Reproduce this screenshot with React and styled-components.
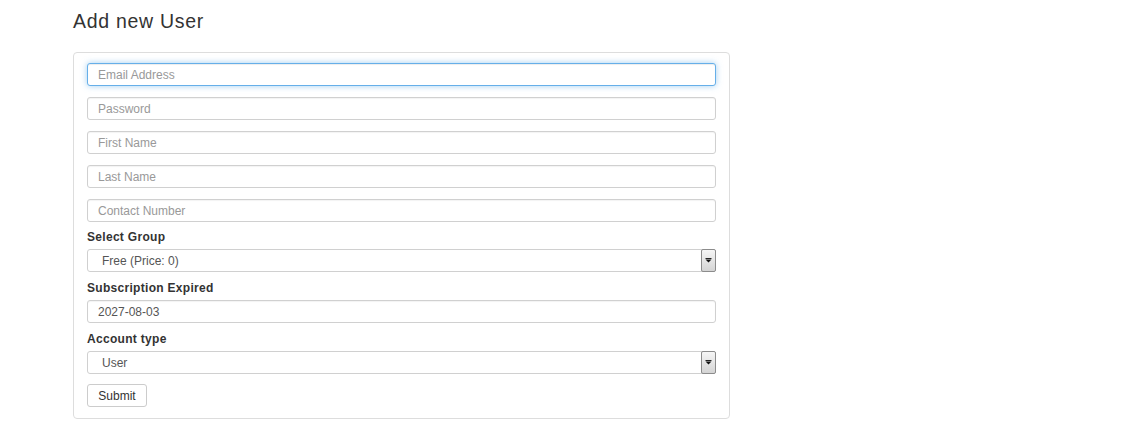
import React from "react";
import styled, { createGlobalStyle } from "styled-components";

const GlobalStyle = createGlobalStyle`
  body {
    margin: 0;
    background: #fff;
    font-family: "Liberation Sans", Arial, sans-serif;
    color: #333;
  }
`;

const Page = styled.div`
  width: 1140px;
  height: 430px;
  padding: 10px 0 0 73px;
  box-sizing: border-box;
`;

const Title = styled.h2`
  margin: 0 0 20px;
  font-size: 19.5px;
  line-height: 22px;
  font-weight: normal;
  letter-spacing: 0.7px;
  color: #333;
`;

const Panel = styled.form`
  width: 657px;
  box-sizing: border-box;
  border: 1px solid #dddddd;
  border-radius: 4px;
  padding: 10px 13px 11px;
  display: flex;
  flex-direction: column;
`;

const Input = styled.input`
  box-sizing: border-box;
  width: 100%;
  height: 23px;
  margin-bottom: ${(p) => (p.$last ? "0" : "11px")};
  padding: 0 10px;
  border: 1px solid ${(p) => (p.$focus ? "#66afe9" : "#d0d0d0")};
  border-radius: 3px;
  font-family: inherit;
  font-size: 12px;
  color: #555;
  background: #fff;
  box-shadow: ${(p) =>
    p.$focus
      ? "inset 0 1px 1px rgba(0,0,0,.075), 0 0 6px rgba(102,175,233,.6)"
      : "inset 0 1px 1px rgba(0,0,0,.05)"};
  outline: none;

  &::placeholder {
    color: #999;
  }
`;

const Label = styled.label`
  display: block;
  margin: ${(p) => (p.$first ? "7px" : "8px")} 0 4px;
  font-size: 12px;
  line-height: 16px;
  font-weight: bold;
  letter-spacing: 0.3px;
  color: #333;
`;

const SelectWrap = styled.div`
  position: relative;
  width: 100%;
  height: 23px;
`;

const Select = styled.select`
  appearance: none;
  -webkit-appearance: none;
  box-sizing: border-box;
  width: 100%;
  height: 23px;
  padding: 0 20px 0 14px;
  border: 1px solid #d0d0d0;
  border-radius: 3px;
  background: #fff;
  font-family: inherit;
  font-size: 12px;
  color: #555;
  outline: none;
`;

const ArrowBox = styled.span`
  position: absolute;
  top: 0;
  right: 0;
  width: 15px;
  height: 23px;
  box-sizing: border-box;
  border: 1px solid #8c8c8c;
  border-radius: 2px;
  background: linear-gradient(#f6f6f6, #d4d4d4);
  display: flex;
  align-items: center;
  justify-content: center;
  pointer-events: none;
`;

const Button = styled.button`
  align-self: flex-start;
  margin-top: 10px;
  height: 23px;
  width: 60px;
  padding: 0;
  border: 1px solid #cccccc;
  border-radius: 3px;
  background: #fff;
  font-family: inherit;
  font-size: 12px;
  color: #333;
`;

const Arrow = () => (
  <svg width="7" height="5" viewBox="0 0 7 5">
    <rect x="0.5" y="0" width="6" height="1" fill="#222" />
    <path d="M0.5 1.5 H6.5 L3.5 4.5 Z" fill="#111" />
  </svg>
);

const Dropdown = ({ value, options }) => (
  <SelectWrap>
    <Select defaultValue={value}>
      {options.map((o) => (
        <option key={o}>{o}</option>
      ))}
    </Select>
    <ArrowBox>
      <Arrow />
    </ArrowBox>
  </SelectWrap>
);

export default function App() {
  return (
    <Page>
      <GlobalStyle />
      <Title>Add new User</Title>
      <Panel onSubmit={(e) => e.preventDefault()}>
        <Input $focus type="email" placeholder="Email Address" />
        <Input type="password" placeholder="Password" />
        <Input type="text" placeholder="First Name" />
        <Input type="text" placeholder="Last Name" />
        <Input $last type="text" placeholder="Contact Number" />
        <Label $first>Select Group</Label>
        <Dropdown value="Free (Price: 0)" options={["Free (Price: 0)"]} />
        <Label>Subscription Expired</Label>
        <Input $last type="text" defaultValue="2027-08-03" />
        <Label>Account type</Label>
        <Dropdown value="User" options={["User", "Admin"]} />
        <Button type="submit">Submit</Button>
      </Panel>
    </Page>
  );
}
